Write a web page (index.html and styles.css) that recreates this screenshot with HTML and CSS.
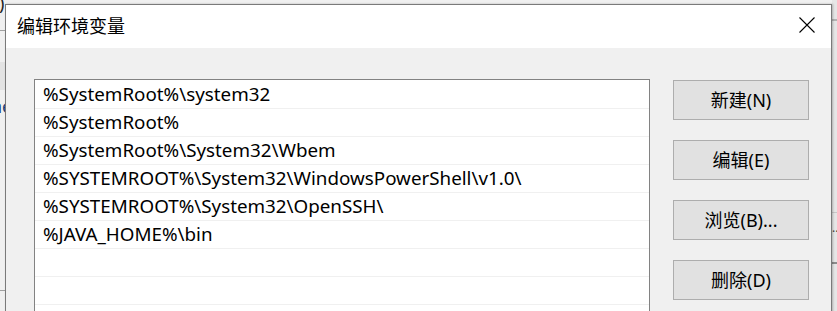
FILE: index.html
```html
<!DOCTYPE html>
<html lang="zh-CN">
<head>
    <meta charset="UTF-8">
    <title>编辑环境变量</title>
    <link rel="stylesheet" href="styles.css">
</head>
<body>
    <!-- window behind the dialog -->
    <div class="backdrop">
        <div class="bg-left">
            <span class="bg-paren">)</span>
            <div class="bg-line bg-line-a"></div>
            <div class="bg-band"></div>
            <span class="bg-text">ne</span>
            <div class="bg-line bg-line-b"></div>
        </div>
        <div class="bg-right">
            <div class="bg-r1"></div>
            <div class="bg-r2"></div>
            <div class="bg-r3">...</div>
            <div class="bg-r4"></div>
        </div>
    </div>

    <div class="dialog">
        <div class="titlebar">
            <span class="title">编辑环境变量</span>
            <svg class="close" width="16" height="16" viewBox="0 0 16 16">
                <path d="M0.5 0.5 L15.5 15.5 M15.5 0.5 L0.5 15.5" stroke="#000" stroke-width="1.1" fill="none"/>
            </svg>
        </div>
        <div class="body">
            <div class="list">
                <div class="row">%SystemRoot%\system32</div>
                <div class="row">%SystemRoot%</div>
                <div class="row">%SystemRoot%\System32\Wbem</div>
                <div class="row">%SYSTEMROOT%\System32\WindowsPowerShell\v1.0\</div>
                <div class="row">%SYSTEMROOT%\System32\OpenSSH\</div>
                <div class="row">%JAVA_HOME%\bin</div>
                <div class="row"></div>
                <div class="row"></div>
                <div class="row"></div>
            </div>
            <div class="buttons">
                <button class="btn">新建(N)</button>
                <button class="btn">编辑(E)</button>
                <button class="btn">浏览(B)...</button>
                <button class="btn">删除(D)</button>
            </div>
        </div>
    </div>
</body>
</html>
```

FILE: styles.css
```css
*{
    margin: 0;
    padding: 0;
    box-sizing: border-box;
}
body{
    width: 837px;
    height: 311px;
    overflow: hidden;
    background: #f0f0f0;
    font-family: "Noto Sans", "Noto Sans CJK SC", sans-serif;
    font-size: 18px;
    color: #000;
    position: relative;
}

/* background window bits */
.backdrop{
    position: absolute;
    inset: 0;
}
.bg-left{
    position: absolute;
    left: 0;
    top: 0;
    width: 6px;
    height: 311px;
    overflow: hidden;
}
.bg-paren{
    position: absolute;
    left: -1px;
    top: -9px;
    font-size: 18px;
    color: #222;
}
.bg-line{
    position: absolute;
    left: 0;
    width: 6px;
    height: 1px;
    background: #a0a0a0;
}
.bg-line-a{ top: 30px; }
.bg-line-b{ top: 290px; }
.bg-band{
    position: absolute;
    left: 0;
    top: 62px;
    width: 6px;
    height: 28px;
    background: #e3e3e3;
}
.bg-text{
    position: absolute;
    left: -9px;
    top: 94px;
    color: #1a3f7a;
    font-size: 18px;
}
.bg-right{
    position: absolute;
    left: 832px;
    top: 0;
    width: 5px;
    height: 311px;
    background: #e6e6e6;
    overflow: hidden;
}
.bg-right div{
    position: absolute;
    left: 0;
    width: 5px;
}
.bg-r1{ top: 19px; height: 2px; background: #b4b4b4; }
.bg-r2{ top: 212px; height: 1px; background: #c8c8c8; }
.bg-r3{ top: 222px; font-size: 12px; line-height: 12px; color: #444; overflow: hidden; }
.bg-r4{ top: 262px; height: 2px; background: #8c8c8c; }

/* dialog window */
.dialog{
    position: absolute;
    left: 5px;
    top: 4px;
    width: 827px;
    height: 330px;
    border: 1px solid #7a7a7a;
    border-bottom: none;
    background: #f0f0f0;
    box-shadow: 1px 0 2px rgba(0,0,0,0.25);
    display: flex;
    flex-direction: column;
}
.titlebar{
    height: 43px;
    flex-shrink: 0;
    background: #fff;
    display: flex;
    align-items: center;
    justify-content: space-between;
    padding: 0 16px 0 11px;
}
.title{
    line-height: 1;
    margin-top: -2px;
}
.close{
    display: block;
    margin-top: -3px;
}
.body{
    flex: 1;
    display: flex;
    align-items: flex-start;
    padding: 31px 21px 0 28px;
    gap: 23px;
}
.list{
    width: 616px;
    height: 260px;
    flex-shrink: 0;
    background: #fff;
    border: 1px solid #828282;
    padding-top: 1px;
}
.row{
    height: 28px;
    border-bottom: 1px solid #f0f0f0;
    padding-left: 8px;
    font-size: 18.8px;
    line-height: 26px;
    white-space: nowrap;
}
.buttons{
    display: flex;
    flex-direction: column;
    gap: 20px;
    padding-top: 1px;
}
.btn{
    width: 136px;
    height: 40px;
    background: #e1e1e1;
    border: 1px solid #adadad;
    font-family: inherit;
    font-size: 18px;
    color: #000;
    line-height: 1;
}
```
